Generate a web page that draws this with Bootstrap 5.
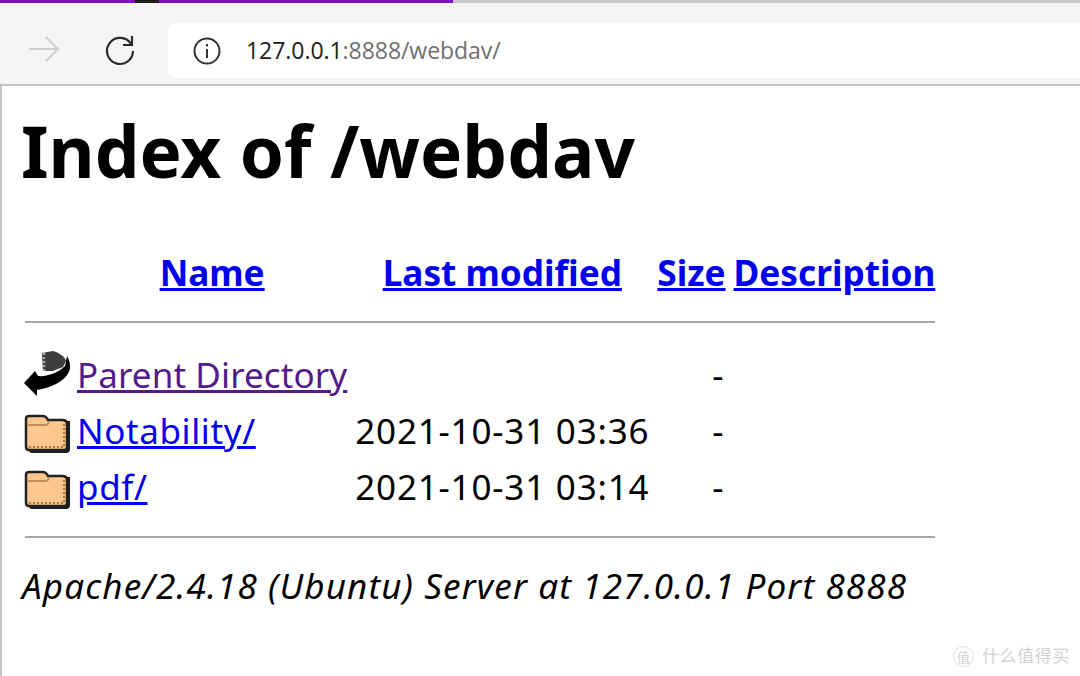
<!DOCTYPE html>
<html>
<head>
    <meta charset="UTF-8">
    <title>Index of /webdav</title>
    <link href="https://cdn.jsdelivr.net/npm/bootstrap@5.3.0/dist/css/bootstrap.min.css" rel="stylesheet">
    <style>
        html, body { height: 100%; overflow: hidden; }
        body { font-family: "Noto Sans", "Open Sans", sans-serif; background: #fff; color: #000; }
        .load-strip { height: 3px; background: #c8c8c8; }
        .load-fill { width: 453px; height: 3px; background: #7a0fd0; }
        .load-tab { width: 24px; height: 3px; margin-left: 135px; background: #1c1c1c; }
        .tool-strip { height: 83px; background: #f5f5f5; border-bottom: 2px solid #c4c4c4; padding: 20px 0 5px 26px; }
        .nav-icon { width: 36px; height: 36px; }
        .reload-icon { margin-left: 40px; }
        .addr-box { height: 55px; margin-left: 30px; padding-left: 25px; background: #fff; border-radius: 8px 0 0 8px; font-family: "Open Sans", sans-serif; font-size: 23px; letter-spacing: -.05px; }
        .addr-host { color: #202020; margin-left: 25px; }
        .addr-rest { color: #6f6f6f; }
        .page-area { border-left: 2px solid #c4c4c4; padding: 27px 0 0 19px; height: 591px; position: relative; }
        .page-title { font-size: 70.9px; font-weight: 700; line-height: 76px; margin: 0 0 61px; }
        .dir-table { font-size: 35px; line-height: 44px; border-collapse: collapse; margin-left: 3px; }
        .dir-table th { text-align: center; font-weight: 700; font-size: 35.2px; padding: 0 4px; }
        .dir-table td { padding: 0 4px; height: 56px; white-space: nowrap; }
        .dir-table a { color: #0000ee; }
        .dir-table a.seen { color: #551a8b; letter-spacing: .1px; }
        .dir-table a.folder-link { letter-spacing: .6px; }
        .dir-rule td { padding: 0; vertical-align: middle; }
        .rule-top td { height: 53px; }
        .rule-end td { height: 40px; }
        .dir-rule hr { margin: 3px 4px 0 1px; border: 0; border-top: 2px solid #a6a6a6; opacity: 1; }
        .cell-icon { width: 49px; padding: 0 !important; }
        .cell-icon svg { display: block; }
        .cell-date { letter-spacing: .8px; }
        .cell-size { text-align: right; padding-right: 6px !important; }
        .server-line { font-size: 35px; font-style: italic; margin: 9px 0 0 1px; line-height: 44px; letter-spacing: 1.15px; }
        .wm-mark { position: absolute; right: 10px; bottom: 10px; color: #d2d2d2; font-family: "Noto Sans CJK SC", sans-serif; font-size: 17px; letter-spacing: .6px; }
        .wm-round { display: inline-block; width: 21px; height: 21px; line-height: 19px; border: 1px solid #dedede; border-radius: 50%; font-size: 13px; text-align: center; letter-spacing: 0; margin-right: 8px; }
    </style>
</head>
<body>
    <div class="load-strip"><div class="load-fill"><div class="load-tab"></div></div></div>

    <div class="tool-strip d-flex align-items-start">
        <svg class="nav-icon mt-2" viewBox="0 0 36 36" fill="none" stroke="#cfcfcf" stroke-width="2"><path d="M3 18H32M20 6L32 18L20 30"/></svg>
        <svg class="nav-icon mt-2 reload-icon" viewBox="0 -2 36 36" fill="none" stroke="#2b2b2b" stroke-width="2.2"><path d="M29 11A13 13 0 1 0 31 18"/><path d="M30 3V12H21"/></svg>
        <div class="addr-box flex-grow-1 d-flex align-items-center">
            <svg width="28" height="28" viewBox="0 0 28 28" fill="none" stroke="#333" stroke-width="2"><circle cx="14" cy="14" r="12.5"/><path d="M14 12V21M14 7V9.5"/></svg>
            <span class="addr-host">127.0.0.1<span class="addr-rest">:8888/webdav/</span></span>
        </div>
    </div>

    <div class="page-area">
        <svg width="0" height="0" class="d-block">
            <defs>
                <filter id="soften"><feGaussianBlur stdDeviation=".6"/></filter>
                <g id="folder-icon" filter="url(#soften)">
                    <path d="M5 14H46V42Q46 46 42 46H8Q5 46 5 43Z" fill="#1a1a1a"/>
                    <path d="M2 12Q2 9 5 9H19Q22 9 24 13H38Q43 13 43 17V40Q43 43 40 43H5Q2 43 2 40Z" fill="#fdc88f" stroke="#222" stroke-width="2.5"/>
                    <path d="M4 18H21Q24 18 25 15" fill="none" stroke="#c08c58" stroke-width="2"/>
                    <path d="M40 17V40M5 40H40" fill="none" stroke="#a87844" stroke-width="2" stroke-dasharray="2 2"/>
                </g>
            </defs>
        </svg>
        <h1 class="page-title">Index of /webdav</h1>
        <table class="dir-table">
            <tr>
                <th></th>
                <th><a href="#">Name</a></th>
                <th><a href="#">Last modified</a></th>
                <th><a href="#">Size</a></th>
                <th><a href="#">Description</a></th>
            </tr>
            <tr class="dir-rule rule-top"><td colspan="5"><hr></td></tr>
            <tr>
                <td class="cell-icon">
                    <svg width="46" height="48" viewBox="0 0 46 48">
                        <g filter="url(#soften)">
                            <path d="M0 32L11 20L14 25C22 26 34 22 41 15L43 5C46 10 47 16 45 21C40 31 26 37 13 39L13 45Z" fill="#000"/>
                            <path d="M18 2L29 0C36 2 41 6 42 10L39 16L29 20L19 20Z" fill="#3d3d3d"/>
                            <path d="M20 2V20" stroke="#aaa" stroke-width="2.5" stroke-dasharray="2 2"/>
                        </g>
                    </svg>
                </td>
                <td><a class="seen" href="#">Parent Directory</a></td>
                <td></td>
                <td class="cell-size">-</td>
                <td></td>
            </tr>
            <tr>
                <td class="cell-icon">
                    <svg width="46" height="48" viewBox="0 0 46 48"><use href="#folder-icon"/></svg>
                </td>
                <td><a class="folder-link" href="#">Notability/</a></td>
                <td class="cell-date">2021-10-31 03:36</td>
                <td class="cell-size">-</td>
                <td></td>
            </tr>
            <tr>
                <td class="cell-icon">
                    <svg width="46" height="48" viewBox="0 0 46 48"><use href="#folder-icon"/></svg>
                </td>
                <td><a class="folder-link" href="#">pdf/</a></td>
                <td class="cell-date">2021-10-31 03:14</td>
                <td class="cell-size">-</td>
                <td></td>
            </tr>
            <tr class="dir-rule rule-end"><td colspan="5"><hr></td></tr>
        </table>
        <p class="server-line">Apache/2.4.18 (Ubuntu) Server at 127.0.0.1 Port 8888</p>
        <div class="wm-mark"><span class="wm-round">值</span>什么值得买</div>
    </div>

    <script src="https://cdn.jsdelivr.net/npm/bootstrap@5.3.0/dist/js/bootstrap.bundle.min.js"></script>
</body>
</html>
